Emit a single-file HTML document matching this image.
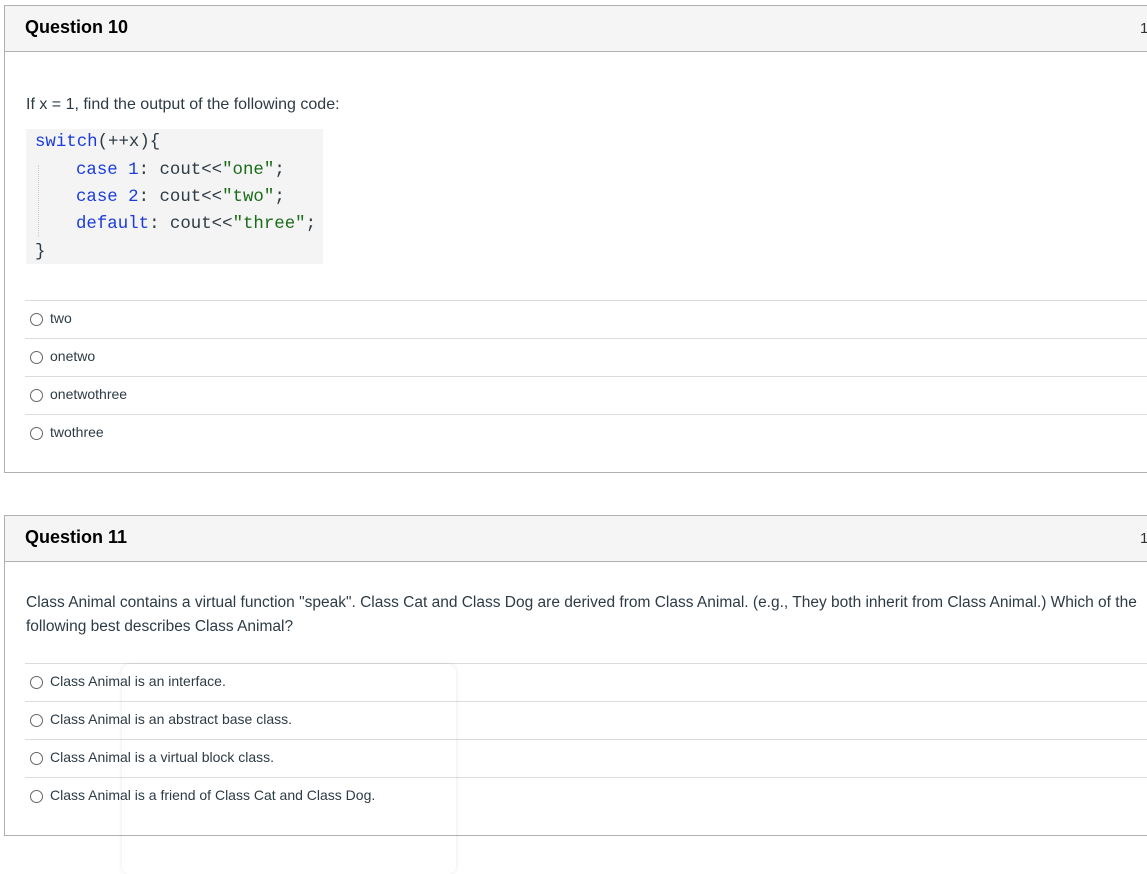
<!DOCTYPE html>
<html><head><style>
body{margin:0;width:1147px;height:857px;overflow:hidden;background:#fff;font-family:"Liberation Sans",sans-serif;color:#2d3b45;position:relative}
.q{position:absolute;left:4px;width:1160px;border:1px solid #b0b0b0;box-sizing:border-box}
.hd{height:46px;background:#f5f5f5;border-bottom:1px solid #b0b0b0;box-sizing:border-box;position:relative}
.hd b{position:absolute;left:20px;top:11px;font-size:18px;color:#000}
.hd span{position:absolute;left:1135px;top:14px;font-size:15px;color:#333}
.t{position:absolute;left:21px;font-size:15.5px;color:#2d3b45;line-height:24px}
.code{position:absolute;left:21px;top:123px;width:297px;height:135px;background:#f4f4f4;font-family:"Liberation Mono","DejaVu Sans Mono",monospace;font-size:17.4px}
.code div{position:absolute;white-space:pre}
.k{color:#1a3cdc}.s{color:#1a6b1a}
.a{position:absolute;left:20px;width:1140px;height:38px;border-top:1px solid #dcdcdc;font-size:14px;color:#2d3b45}
.a i{position:absolute;left:5px;top:12px;width:11px;height:11px;border:1px solid #666;border-radius:50%}
.a span{position:absolute;left:25px;top:9px}
</style></head><body>
<div class="q" style="top:5px;height:468px">
 <div class="hd"><b>Question 10</b><span>1</span></div>
 <div class="t" style="top:87px;font-size:16px">If x = 1, find the output of the following code:</div>
 <div class="code">
  <div style="left:9px;top:4px"><span class="k">switch</span>(++x){</div>
  <div style="left:50px;top:32px"><span class="k">case 1</span>: cout&lt;&lt;<span class="s">"one"</span>;</div>
  <div style="left:50px;top:59px"><span class="k">case 2</span>: cout&lt;&lt;<span class="s">"two"</span>;</div>
  <div style="left:50px;top:86px"><span class="k">default</span>: cout&lt;&lt;<span class="s">"three"</span>;</div>
  <div style="left:9px;top:114px">}</div>
  <div style="left:12px;top:36px;height:72px;border-left:1px dotted #ccc"></div>
 </div>
 <div class="a" style="top:294px"><i></i><span>two</span></div>
 <div class="a" style="top:332px"><i></i><span>onetwo</span></div>
 <div class="a" style="top:370px"><i></i><span>onetwothree</span></div>
 <div class="a" style="top:408px"><i></i><span>twothree</span></div>
</div>
<div class="q" style="top:515px;height:321px">
 <div class="hd"><b>Question 11</b><span>1</span></div>
 <div class="t" style="top:75px;width:1125px">Class Animal contains a virtual function "speak". Class Cat and Class Dog are derived from Class Animal. (e.g., They both inherit from Class Animal.) Which of the following best describes Class Animal?</div>
 <div class="a" style="top:147px"><i></i><span>Class Animal is an interface.</span></div>
 <div class="a" style="top:185px"><i></i><span>Class Animal is an abstract base class.</span></div>
 <div class="a" style="top:223px"><i></i><span>Class Animal is a virtual block class.</span></div>
 <div class="a" style="top:261px"><i></i><span>Class Animal is a friend of Class Cat and Class Dog.</span></div>
</div>
<div style="position:absolute;left:122px;top:664px;width:334px;height:210px;border-radius:8px;box-shadow:0 0 4px rgba(0,0,0,0.1)"></div>
</body></html>
